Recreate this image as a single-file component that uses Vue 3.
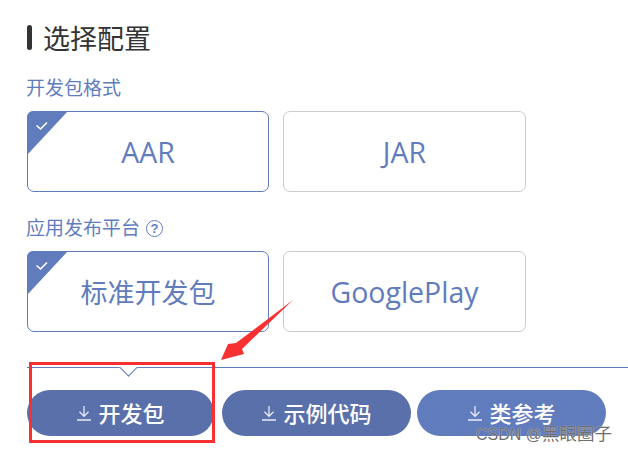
<script setup>
const groups = [
  { label: '开发包格式', help: false, options: [{ t: 'AAR', on: true, latin: true }, { t: 'JAR', on: false, latin: true }] },
  { label: '应用发布平台', help: true, options: [{ t: '标准开发包', on: true }, { t: 'GooglePlay', on: false, latin: true }] },
]
const buttons = [
  { t: '开发包', cls: 'b1' },
  { t: '示例代码', cls: 'b2' },
  { t: '类参考', cls: 'b3' },
]
</script>

<template>
  <div class="page">
    <div class="title"><i class="bar"></i><span>选择配置</span></div>
    <section v-for="g in groups" :key="g.label" class="group">
      <div class="label">
        <span class="label-text">{{ g.label }}</span>
        <span v-if="g.help" class="help">?</span>
      </div>
      <div class="cards">
        <div v-for="o in g.options" :key="o.t" class="card" :class="{ on: o.on, latin: o.latin }">
          <svg v-if="o.on" class="corner" width="41" height="44" viewBox="0 0 41 44">
            <path d="M0 44V6a6 6 0 0 1 6-6H41Z" fill="#617cbd" />
            <path d="M9.500 14.500l4 3.500 6.500-6.500" fill="none" stroke="#fff" stroke-width="1.600" />
          </svg>
          <span>{{ o.t }}</span>
        </div>
      </div>
    </section>
    <div class="rule"><i class="caret"></i></div>
    <div class="buttons">
      <div v-for="b in buttons" :key="b.t" class="btn" :class="b.cls">
        <svg width="16" height="16" viewBox="0 0 16 16">
          <path d="M8 1v10M3.500 6.800 8 11.300l4.500-4.500M1 15h14" fill="none" stroke="#e6eaf4" stroke-width="1.300" />
        </svg>
        <span class="btn-text">{{ b.t }}</span>
      </div>
    </div>

    <div class="redbox"></div>
    <svg class="arrow" width="80" height="66" viewBox="0 0 80 66">
      <path d="M72 1 15 44 7 45 0 61 23 55 21 50Z" fill="#f73131" />
    </svg>
    <div class="mark">CSDN @<span class="mark-cjk">黑眼圈子</span></div>
  </div>
</template>

<style>
html, body { margin: 0; background: #fff; }
</style>

<style scoped>
.page {
  position: relative;
  width: 628px;
  height: 453px;
  overflow: hidden;
  box-sizing: border-box;
  padding: 24px 0 0 27px;
  background: #fff;
  font-family: "Open Sans", "Noto Sans CJK SC", sans-serif;
}
.title {
  display: flex;
  align-items: center;
  height: 26px;
  gap: 11px;
  font-size: 27px;
  color: #333;
}
.bar {
  width: 5px;
  height: 25px;
  border-radius: 3px;
  background: #333;
}
.group { margin-top: 25px; }
.group + .group { margin-top: 23px; }
.label {
  display: flex;
  align-items: center;
  gap: 6px;
  height: 26px;
  font-size: 19px;
  color: #617cbd;
}
.label-text { margin-bottom: 2px; margin-left: -1px; }
.help {
  display: flex;
  align-items: center;
  justify-content: center;
  box-sizing: border-box;
  width: 17px;
  height: 17px;
  border: 1.500px solid #617cbd;
  border-radius: 50%;
  font-size: 13px;
  font-weight: 700;
  line-height: 1;
  font-family: "Liberation Sans", sans-serif;
}
.cards {
  display: flex;
  gap: 14px;
  margin-top: 10px;
}
.card {
  position: relative;
  display: flex;
  align-items: center;
  justify-content: center;
  box-sizing: border-box;
  width: 243px;
  height: 81px;
  border: 1px solid #ccc;
  border-radius: 7px;
  font-size: 27px;
  color: #617cbd;
}
.card.latin { font-size: 28.500px; }
.card.on {
  width: 242px;
  border-color: #617cbd;
}
.corner {
  position: absolute;
  left: -1px;
  top: -1px;
}
.rule {
  position: relative;
  height: 1px;
  margin-top: 35px;
  background: #617cbd;
}
.caret {
  position: absolute;
  left: 95px;
  top: -6px;
  width: 13px;
  height: 13px;
  box-sizing: border-box;
  background: #fff;
  border-right: 1px solid #617cbd;
  border-bottom: 1px solid #617cbd;
  transform: rotate(45deg);
}
.buttons {
  display: flex;
  margin-top: 22px;
}
.btn {
  display: flex;
  align-items: center;
  justify-content: center;
  gap: 6px;
  height: 46px;
  border-radius: 23px;
  color: #fff;
  font-size: 22px;
  font-weight: 500;
}
.btn-text { margin-bottom: 3px; }
.b1 { width: 187px; background: #5a70aa; }
.b2 { width: 189px; margin-left: 8px; background: #5a70aa; }
.b3 { width: 189px; margin-left: 6px; background: #617cbd; }
.redbox {
  position: absolute;
  left: 29px;
  top: 362px;
  width: 186px;
  height: 81px;
  box-sizing: border-box;
  border: 3px solid #f73131;
}
.arrow {
  position: absolute;
  left: 221px;
  top: 299px;
}
.mark {
  position: absolute;
  left: 476px;
  top: 423px;
  font-size: 16px;
  line-height: 22px;
  font-family: "Liberation Sans", "Noto Sans CJK SC", sans-serif;
  color: #6e6e6e;
  text-shadow: 0 0 1px rgba(255, 255, 255, 0.8);
}
.mark-cjk { font-size: 17.500px; }
</style>
